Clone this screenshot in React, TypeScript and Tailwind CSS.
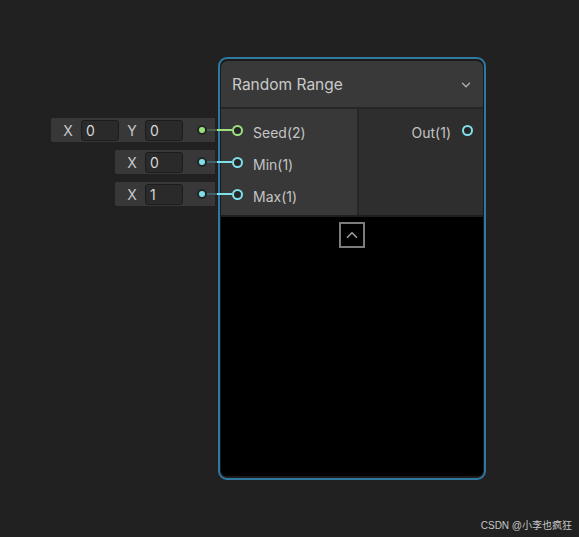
import { ChevronDown, ChevronUp } from "lucide-react";

type Port = { label: string; color: "green" | "cyan" };

const inputs: Port[] = [
  { label: "Seed(2)", color: "green" },
  { label: "Min(1)", color: "cyan" },
  { label: "Max(1)", color: "cyan" },
];

function Field({ axis, value }: { axis: string; value: string }) {
  return (
    <div className="flex items-center">
      <span className="w-[26px] text-center text-[14px] text-[#c8c8c8]">{axis}</span>
      <div className="w-[38px] h-[21px] rounded-[3px] border border-[#1c1c1c] bg-[#2a2a2a] pl-[4px] text-[14px] leading-[19px] text-[#d6d6d6]">
        {value}
      </div>
    </div>
  );
}

function InlineRow({
  fields,
  color,
}: {
  fields: { axis: string; value: string }[];
  color: "green" | "cyan";
}) {
  const green = color === "green";
  return (
    <div className="relative flex items-center h-[24px] pl-[4px] bg-[#383838] rounded-l-[2px]">
      {fields.map((f) => (
        <Field key={f.axis} axis={f.axis} value={f.value} />
      ))}
      <div className="w-[32px] flex items-center">
        <div
          className={`ml-[14px] w-[10px] h-[10px] rounded-full border-2 border-[#242424] ${
            green ? "bg-[#9ce07f]" : "bg-[#7fdfea]"
          }`}
        />
      </div>
      <div
        className={`absolute right-[-2px] top-[11px] w-[10px] h-[2px] ${
          green ? "bg-[#4d5e48]" : "bg-[#40606a]"
        }`}
      />
      <div
        className={`absolute right-[-17px] top-[11px] w-[15px] h-[2px] z-10 ${
          green ? "bg-[#9ce07f]" : "bg-[#7fdfea]"
        }`}
      />
    </div>
  );
}

export default function App() {
  return (
    <div className="relative w-[579px] h-[537px] bg-[#212121] font-['Inter',sans-serif] overflow-hidden">
      <div className="flex pl-[51px] pt-[57px]">
        <div className="w-[167px] pt-[61px] pr-[3px] flex flex-col items-end gap-[8px] relative z-10">
          <InlineRow
            color="green"
            fields={[
              { axis: "X", value: "0" },
              { axis: "Y", value: "0" },
            ]}
          />
          <InlineRow color="cyan" fields={[{ axis: "X", value: "0" }]} />
          <InlineRow color="cyan" fields={[{ axis: "X", value: "1" }]} />
        </div>

        <div className="w-[268px] h-[423px] rounded-[9px] border-2 border-[#2e78a2] bg-[#1b1b1b] px-[1px] pt-[2px] pb-[2px]">
          <div className="h-full flex flex-col rounded-[6px] overflow-hidden bg-black">
            <div className="h-[48px] shrink-0 flex items-center justify-between bg-[#393939] pl-[11px] pr-[10px] border-b-2 border-[#262626]">
              <span className="mt-[2px] text-[15.5px] text-[#c9c9c9]">Random Range</span>
              <ChevronDown size={14} strokeWidth={2.2} className="mt-[2px] text-[#b0b0b0]" />
            </div>

            <div className="h-[108px] shrink-0 flex border-b-2 border-[#1e1e1e]">
              <div className="w-[136px] bg-[#383838] pt-[5px] flex flex-col">
                {inputs.map((p) => (
                  <div key={p.label} className="h-[32px] flex items-center pl-[11px]">
                    <div
                      className={`w-[11px] h-[11px] rounded-full border-2 bg-[#262626] ${
                        p.color === "green" ? "border-[#9ce07f]" : "border-[#7fdfea]"
                      }`}
                    />
                    <span className="ml-[10px] mt-[4px] text-[14px] text-[#c4c4c4]">{p.label}</span>
                  </div>
                ))}
              </div>
              <div className="w-[2px] bg-[#262626]" />
              <div className="flex-1 bg-[#2e2e2e] pt-[5px]">
                <div className="h-[32px] flex items-center justify-end pr-[10px]">
                  <span className="mt-[4px] text-[14px] text-[#c4c4c4]">Out(1)</span>
                  <div className="ml-[11px] w-[11px] h-[11px] rounded-full border-2 border-[#7fdfea] bg-[#262626]" />
                </div>
              </div>
            </div>

            <div className="flex-1 bg-black flex justify-center pt-[5px]">
              <div className="w-[26px] h-[26px] border-2 border-[#7c7c7c] flex items-center justify-center">
                <ChevronUp size={18} strokeWidth={2.2} className="text-[#9a9a9a]" />
              </div>
            </div>
          </div>
        </div>
      </div>

      <div className="absolute right-[7px] bottom-[4px] text-[10px] text-[#c6c6c6] font-['Liberation_Sans','Noto_Sans_CJK_SC',sans-serif]">
        CSDN @小李也疯狂
      </div>
    </div>
  );
}
